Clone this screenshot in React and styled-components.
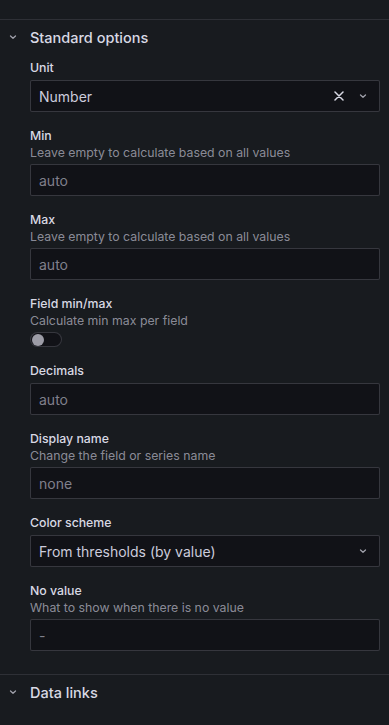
import React from 'react';
import styled, { createGlobalStyle } from 'styled-components';

const GlobalStyle = createGlobalStyle`
  html, body {
    margin: 0;
    padding: 0;
    background: #181b1f;
  }
  * { box-sizing: border-box; }
`;

const Pane = styled.div`
  width: 389px;
  height: 725px;
  overflow: hidden;
  background: #181b1f;
  font-family: Inter, "Noto Sans", "Liberation Sans", sans-serif;
  color: #ccccdc;
  padding-top: 19px;
`;

const Category = styled.div`
  border-top: 1px solid rgba(204, 204, 220, 0.12);
`;

const CategoryHeader = styled.div`
  display: flex;
  align-items: center;
  height: 34px;
  padding-left: 9px;
  gap: 13px;
  font-size: 14.5px;
  font-weight: 500;
  color: #d8d9e4;
`;

const CategoryBody = styled.div`
  padding: 5px 9px 23px 30px;
`;

const Field = styled.div`
  & + & {
    margin-top: 15px;
  }
`;

const Label = styled.div`
  font-size: 12.3px;
  font-weight: 500;
  line-height: 18px;
  color: #d8d9e4;
`;

const Description = styled.div`
  font-size: 12.3px;
  line-height: 16px;
  color: rgba(204, 204, 220, 0.65);
`;

const Control = styled.div`
  margin-top: 3px;
`;

const Input = styled.input`
  display: block;
  width: 100%;
  height: 32px;
  padding: 0 8px;
  background: #111217;
  border: 1px solid rgba(204, 204, 220, 0.2);
  border-radius: 2px;
  font-family: inherit;
  font-size: 14px;
  color: #ccccdc;
  outline: none;

  &::placeholder {
    color: rgba(204, 204, 220, 0.6);
  }
`;

const SelectBox = styled.div`
  display: flex;
  align-items: center;
  height: 32px;
  padding: 0 12px 0 8px;
  background: #111217;
  border: 1px solid rgba(204, 204, 220, 0.2);
  border-radius: 2px;
  font-size: 14px;
  color: #ccccdc;
`;

const SelectValue = styled.span`
  flex: 1;
`;

const SelectIcons = styled.span`
  display: flex;
  align-items: center;
  gap: 15px;
  color: #a0a1ab;
`;

const SwitchTrack = styled.div`
  width: 32px;
  height: 15px;
  border-radius: 8px;
  background: #111217;
  border: 1px solid rgba(204, 204, 220, 0.2);
  display: flex;
  align-items: center;
  padding-left: 1px;
  margin-top: 3px;
`;

const SwitchKnob = styled.div`
  width: 12px;
  height: 12px;
  border-radius: 50%;
  background: #9c9ca6;
`;

const Chevron = ({ size = 8, color = 'currentColor' }) => (
  <svg width={size} height={size} viewBox="0 0 8 8" fill="none">
    <path d="M1.5 3 L4 5.2 L6.5 3" stroke={color} strokeWidth="1.3" strokeLinecap="round" strokeLinejoin="round" />
  </svg>
);

const Cross = () => (
  <svg width="10" height="10" viewBox="0 0 10 10" fill="none">
    <path d="M1 1 L9 9 M9 1 L1 9" stroke="#d8d9e4" strokeWidth="1.5" strokeLinecap="round" />
  </svg>
);

const fields = [
  { label: 'Min', description: 'Leave empty to calculate based on all values', placeholder: 'auto' },
  { label: 'Max', description: 'Leave empty to calculate based on all values', placeholder: 'auto' },
  { label: 'Field min/max', description: 'Calculate min max per field', toggle: true },
  { label: 'Decimals', placeholder: 'auto' },
  { label: 'Display name', description: 'Change the field or series name', placeholder: 'none' },
];

function App() {
  return (
    <>
      <GlobalStyle />
      <Pane>
        <Category>
          <CategoryHeader>
            <Chevron color="#a0a1ab" />
            Standard options
          </CategoryHeader>
          <CategoryBody>
            <Field>
              <Label>Unit</Label>
              <Control>
                <SelectBox>
                  <SelectValue>Number</SelectValue>
                  <SelectIcons>
                    <Cross />
                    <Chevron />
                  </SelectIcons>
                </SelectBox>
              </Control>
            </Field>
            {fields.map(f => (
              <Field key={f.label}>
                <Label>{f.label}</Label>
                {f.description && <Description>{f.description}</Description>}
                {f.toggle ? (
                  <SwitchTrack><SwitchKnob /></SwitchTrack>
                ) : (
                  <Control>
                    <Input readOnly placeholder={f.placeholder} />
                  </Control>
                )}
              </Field>
            ))}
            <Field>
              <Label>Color scheme</Label>
              <Control>
                <SelectBox>
                  <SelectValue>From thresholds (by value)</SelectValue>
                  <SelectIcons>
                    <Chevron />
                  </SelectIcons>
                </SelectBox>
              </Control>
            </Field>
            <Field>
              <Label>No value</Label>
              <Description>What to show when there is no value</Description>
              <Control>
                <Input readOnly placeholder="-" />
              </Control>
            </Field>
          </CategoryBody>
        </Category>
        <Category>
          <CategoryHeader>
            <Chevron color="#a0a1ab" />
            Data links
          </CategoryHeader>
        </Category>
      </Pane>
    </>
  );
}

export default App;
